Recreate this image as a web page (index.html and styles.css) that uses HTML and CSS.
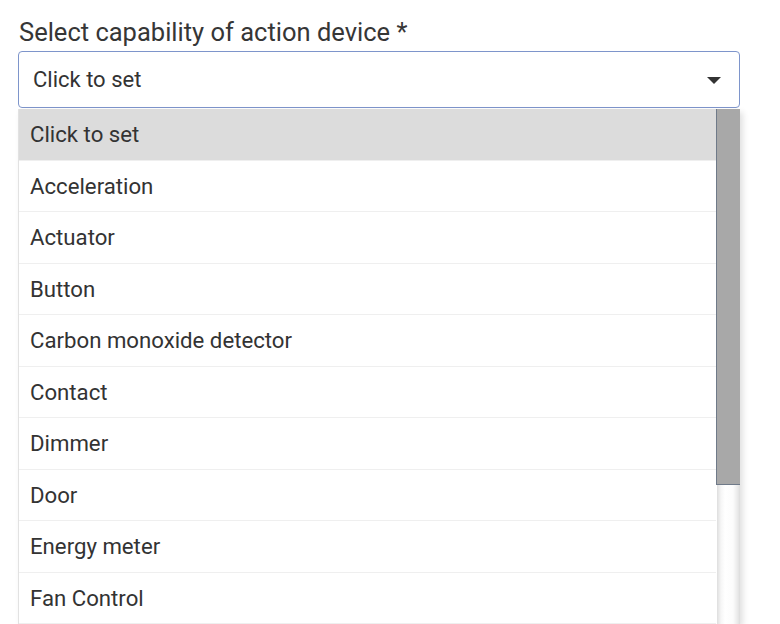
FILE: index.html
```html
<!DOCTYPE html>
<html>
<head>
<meta charset="utf-8">
<link rel="stylesheet" href="styles.css">
</head>
<body>
<div class="field">
  <div class="label">Select capability of action device *</div>
  <div class="select">
    <span class="value">Click to set</span>
    <svg class="caret" width="16" height="9" viewBox="0 0 16 9"><path d="M1 1 L15 1 L8 8 Z" fill="#333"/></svg>
  </div>
  <div class="dropdown">
    <ul class="options">
      <li class="option selected">Click to set</li>
      <li class="option">Acceleration</li>
      <li class="option">Actuator</li>
      <li class="option">Button</li>
      <li class="option">Carbon monoxide detector</li>
      <li class="option">Contact</li>
      <li class="option">Dimmer</li>
      <li class="option">Door</li>
      <li class="option">Energy meter</li>
      <li class="option">Fan Control</li>
    </ul>
    <div class="scrollbar">
      <div class="thumb"></div>
      <div class="track"></div>
    </div>
  </div>
</div>
</body>
</html>
```
FILE: styles.css
```css
html, body {
  margin: 0;
  padding: 0;
  background: #ffffff;
  overflow: hidden;
  height: 624px;
}
body {
  font-family: Roboto, "Liberation Sans", sans-serif;
  color: #333333;
}
.field {
  margin-left: 18px;
  width: 722px;
  padding-top: 17px;
}
.label {
  font-size: 25.5px;
  line-height: 30px;
  padding-left: 1px;
  color: #363636;
  margin-bottom: 4px;
}
.select {
  box-sizing: border-box;
  height: 57px;
  border: 1px solid #7e95cb;
  border-radius: 4px;
  display: flex;
  align-items: center;
  justify-content: space-between;
  padding: 0 17px 0 14px;
  font-size: 22px;
  color: #333;
}
.caret {
  display: block;
  margin-top: 1px;
}
.dropdown {
  margin-top: 1px;
  display: flex;
  box-sizing: border-box;
  width: 722px;
  height: 515px;
  box-shadow: 3px 3px 6px rgba(0,0,0,0.12);
  border-left: 1px solid #e2e2e2;
}
.options {
  list-style: none;
  margin: 0;
  padding: 0;
  flex: 1;
  overflow: hidden;
}
.option {
  box-sizing: border-box;
  height: 51.5px;
  line-height: 50px;
  padding-left: 11px;
  font-size: 22.2px;
  color: #333;
  border-bottom: 1px solid #efefef;
  white-space: nowrap;
}
.option.selected {
  background: #dcdcdc;
}
.scrollbar {
  width: 24px;
  display: flex;
  flex-direction: column;
}
.thumb {
  height: 376px;
  background: #a8a8a8;
  border-left: 1px solid #6f7a89;
  border-bottom: 1px solid #6f7a89;
  box-sizing: border-box;
}
.track {
  flex: 1;
  margin-left: 1px;
  background: linear-gradient(to right, #dedede 0px, #f6f6f6 4px, #ffffff 8px, #fcfcfc 16px, #e8e8e8 21px, #dcdcdc 23px);
}
```
